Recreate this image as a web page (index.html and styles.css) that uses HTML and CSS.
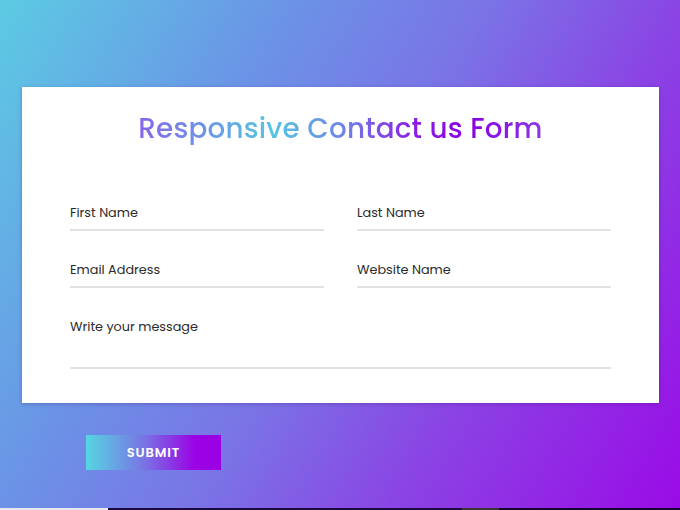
FILE: index.html
```html
<!DOCTYPE html>
<html>
<head>
<meta charset="utf-8">
<link rel="stylesheet" href="styles.css">
</head>
<body>
<div class="page">
  <form class="card">
    <h1 class="title">Responsive Contact us Form</h1>
    <div class="grid">
      <div class="field"><span class="label">First Name</span></div>
      <div class="field"><span class="label">Last Name</span></div>
      <div class="field"><span class="label">Email Address</span></div>
      <div class="field"><span class="label">Website Name</span></div>
      <div class="field wide"><span class="label">Write your message</span></div>
    </div>
  </form>
  <div class="actions">
    <button class="submit" type="button">SUBMIT</button>
  </div>
</div>
<div class="strip"><span class="s1"></span><span class="s2"></span><span class="s3"></span><span class="s4"></span></div>
</body>
</html>
```
FILE: styles.css
```css
html, body {
  margin: 0;
  padding: 0;
  height: 510px;
  overflow: hidden;
}
body {
  font-family: "Poppins", "Inter", "Noto Sans", sans-serif;
  background: linear-gradient(120deg, #5ccbe3 0%, #6b93e6 30%, #7a74e6 50%, #8a45e4 70%, #9a0be6 100%);
  display: flex;
  flex-direction: column;
}
.page {
  flex: 1;
  padding: 87px 21px 0 22px;
}
.card {
  display: block;
  background: #fff;
  height: 316px;
  box-sizing: border-box;
  padding: 26px 48px 0 48px;
  box-shadow: 0 1px 4px rgba(40, 0, 90, 0.25);
}
.title {
  margin: 0;
  text-align: center;
  font-size: 27.8px;
  font-weight: 500;
  line-height: 32px;
  letter-spacing: 0.2px;
  background: linear-gradient(90deg, #8566e8 0%, #55c6e2 33%, #6e86e8 50%, #8c1ce6 68%, #8a00e0 82%, #8b3ae6 100%);
  -webkit-background-clip: text;
  background-clip: text;
  color: transparent;
  width: max-content;
  margin-left: auto;
  margin-right: auto;
}
.grid {
  margin-top: 58px;
  display: grid;
  grid-template-columns: 1fr 1fr;
  column-gap: 33px;
  row-gap: 29px;
}
.field {
  height: 28px;
  border-bottom: 2px solid #e2e2e2;
  box-sizing: border-box;
}
.field.wide {
  grid-column: 1 / 3;
  height: 52px;
}
.label {
  display: block;
  font-size: 12.8px;
  line-height: 18px;
  padding-top: 1px;
  color: #2b2b2b;
}
.actions {
  padding: 32px 0 0 64px;
}
.submit {
  width: 135px;
  height: 35px;
  border: 0;
  padding: 0;
  font-family: "Poppins", "Inter", "Noto Sans", sans-serif;
  font-size: 13px;
  font-weight: 600;
  letter-spacing: 0.9px;
  color: #fff;
  background: linear-gradient(90deg, #55d6e1 0%, #7a6fe4 45%, #9a04e4 80%, #9b00e3 100%);
}
.strip {
  height: 2px;
  display: flex;
}
.strip span { display: block; height: 2px; }
.s1 { width: 108px; background: #e8e8ee; }
.s2 { width: 354px; background: #1a0a40; }
.s3 { width: 37px; background: #3a3530; }
.s4 { flex: 1; background: #150530; }
```
